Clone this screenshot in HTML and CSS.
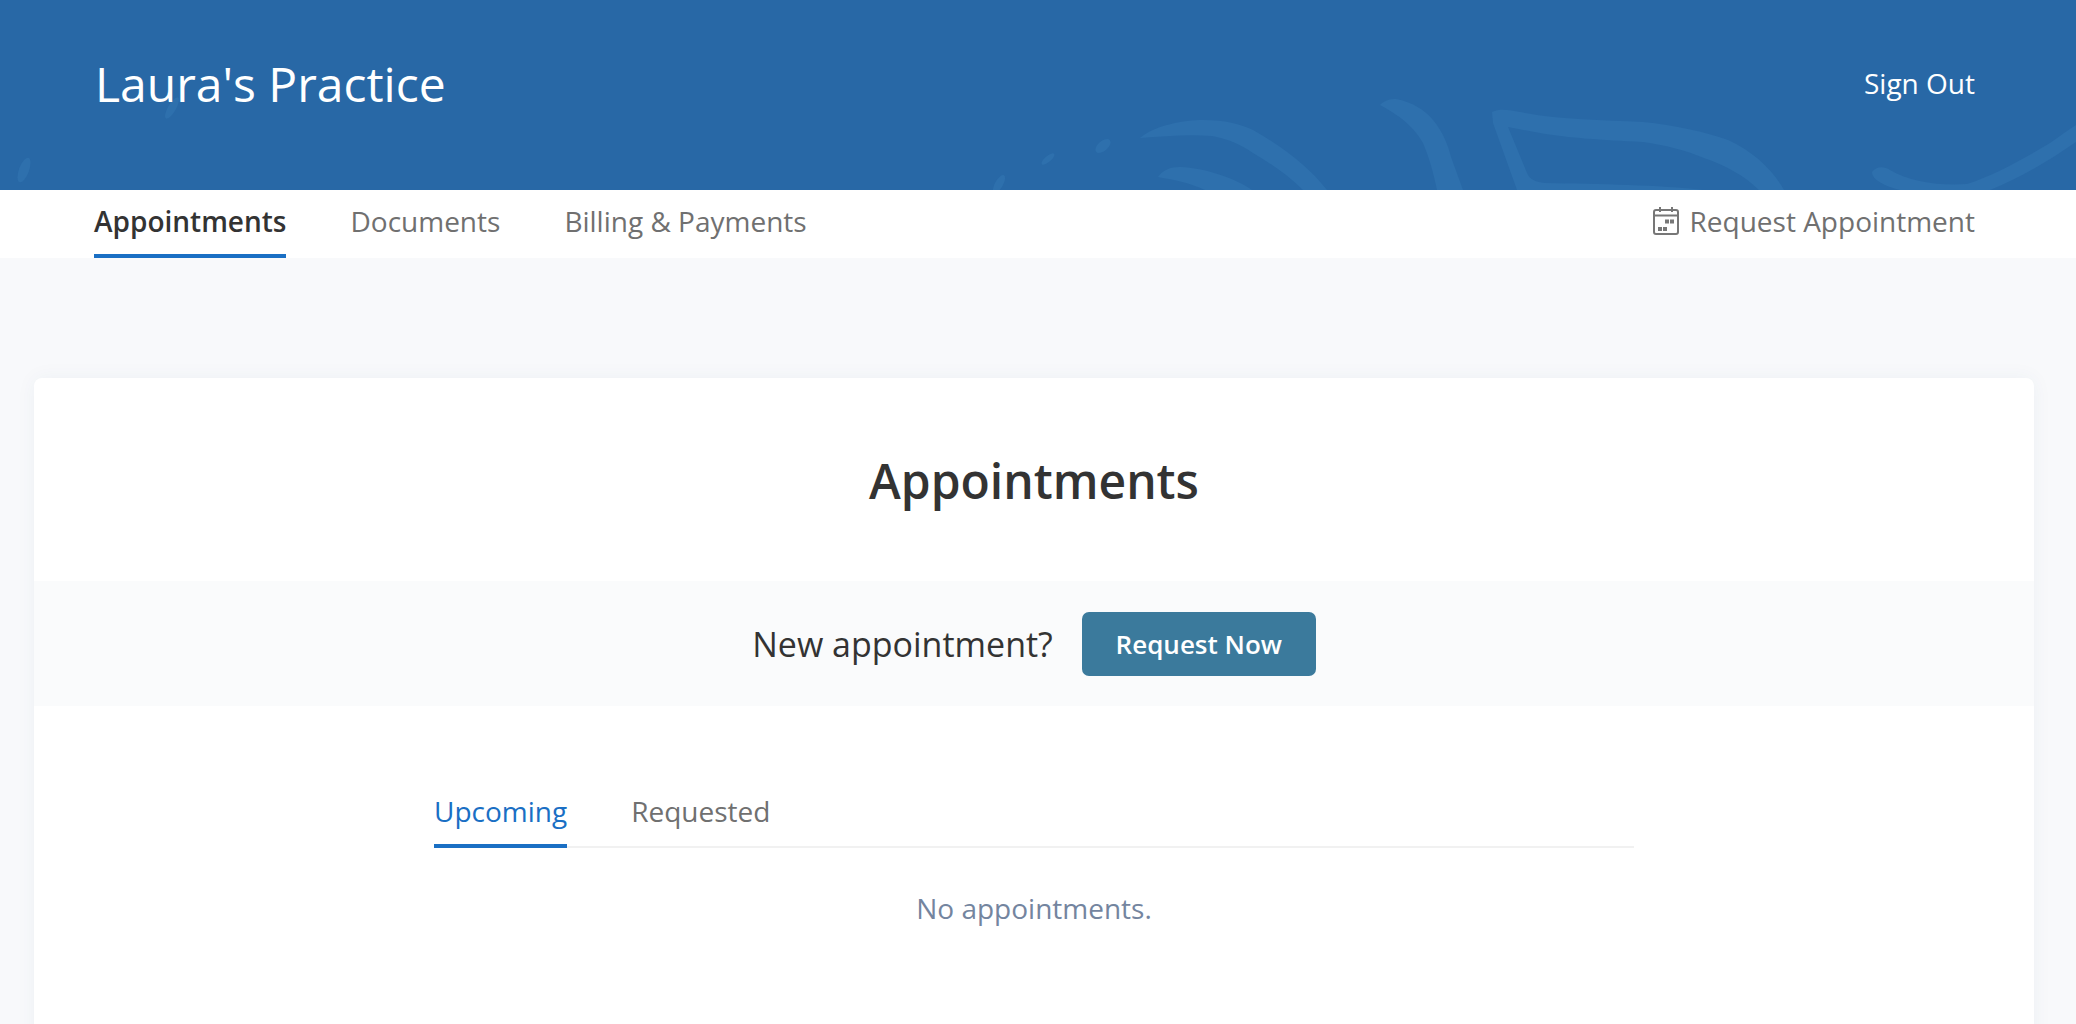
FILE: index.html
```html
<!DOCTYPE html>
<html lang="en">
<head>
  <meta charset="UTF-8" />
  <title>Appointments</title>
  <link rel="stylesheet" href="styles.css">
</head>
<body>
  <div class="header">
    <svg class="header-art" viewBox="0 0 2076 190" width="2076" height="190" aria-hidden="true">
      <g fill="#2e70ad">
        <path d="M1140 138C1155 125 1185 120 1203 120C1225 120 1240 124 1253 130C1285 148 1310 168 1327 190L1303 190C1288 175 1270 163 1253 153C1240 144 1228 139 1212 136C1190 134 1165 136 1140 138Z"/>
        <path d="M1158 177C1163 170 1170 167 1180 167C1205 168 1235 178 1252 190L1205 190C1190 183 1175 180 1158 177Z"/>
        <path d="M1380 105C1385 100 1390 99 1396 99C1412 102 1425 110 1433 120C1443 132 1448 145 1451 157L1463 190L1437 190C1433 170 1428 155 1423 143C1417 132 1405 118 1380 105Z"/>
        <path d="M1492 112C1500 108 1510 110 1520 112C1560 120 1600 120 1643 122C1675 125 1705 132 1728 140C1755 152 1774 172 1784 190L1759 190C1745 176 1725 165 1704 158C1685 150 1665 145 1643 142C1600 140 1570 138 1540 133L1508 127L1527 173C1530 180 1536 182 1545 183C1600 184 1660 185 1703 190L1517 190L1493 123Z"/>
        <path d="M1872 172C1876 166 1884 166 1890 170C1910 182 1940 186 1967 184C1995 175 2025 158 2050 143C2060 136 2068 130 2076 125L2076 142C2050 160 2020 178 1990 190L1900 190C1885 186 1872 180 1872 172Z"/>
        <ellipse cx="1103" cy="146" rx="5" ry="9" transform="rotate(50 1103 146)"/>
        <ellipse cx="1048" cy="159" rx="3" ry="8" transform="rotate(50 1048 159)"/>
        <ellipse cx="24" cy="170" rx="5" ry="13" transform="rotate(20 24 170)"/>
        <ellipse cx="172" cy="108" rx="4" ry="12" transform="rotate(30 172 108)"/>
        <ellipse cx="999" cy="184" rx="4" ry="10" transform="rotate(30 999 184)"/>
      </g>
    </svg>
    <div class="practice-name">Laura's Practice</div>
    <a class="sign-out" href="#">Sign Out</a>
  </div>

  <div class="nav">
    <div class="nav-links">
      <a class="nav-link active" href="#">Appointments</a>
      <a class="nav-link" href="#">Documents</a>
      <a class="nav-link" href="#">Billing &amp; Payments</a>
    </div>
    <a class="nav-request" href="#">
      <svg class="calendar" viewBox="0 0 26 28" width="26" height="28" aria-hidden="true">
        <rect x="1" y="3" width="24" height="24" rx="2" fill="none" stroke="currentColor" stroke-width="2"/>
        <path d="M1 8.500h24M7 0v5M19 0v5" fill="none" stroke="currentColor" stroke-width="2"/>
        <path d="M12 12.500h4v4h-4zM17 12.500h4v4h-4zM5 20h4v4H5zM10 20h4v4h-4z" fill="currentColor"/>
      </svg>
      Request Appointment
    </a>
  </div>

  <div class="main">
    <div class="card">
      <h1>Appointments</h1>
      <div class="new-band">
        <span>New appointment?</span>
        <button class="request-btn">Request Now</button>
      </div>
      <div class="tabs-wrap">
        <div class="tabs">
          <a class="tab active" href="#">Upcoming</a>
          <a class="tab" href="#">Requested</a>
        </div>
        <p class="empty">No appointments.</p>
      </div>
    </div>
  </div>
</body>
</html>
```

FILE: styles.css
```css
html, body {
  height: 1024px;
  overflow: hidden;
}
body {
  margin: 0;
  font-family: "Open Sans", "Noto Sans", sans-serif;
  background: #f8f9fb;
  color: #333;
}
a {
  text-decoration: none;
}
.header {
  position: relative;
  height: 190px;
  padding: 0 101px 0 95px;
  background: #2868a6;
  color: #fff;
  display: flex;
  justify-content: space-between;
  align-items: center;
  box-sizing: border-box;
  overflow: hidden;
}
.header-art {
  position: absolute;
  left: 0;
  top: 0;
}
.practice-name {
  position: relative;
  font-size: 48px;
  line-height: 60px;
  margin-top: -22px;
}
.sign-out {
  position: relative;
  color: #fff;
  font-size: 28px;
  line-height: 38px;
  margin-top: -24px;
}
.nav {
  height: 68px;
  padding: 0 101px 0 94px;
  background: #fff;
  display: flex;
  justify-content: space-between;
  box-sizing: border-box;
}
.nav-links {
  display: flex;
  gap: 64px;
}
.nav-link {
  color: #707070;
  font-size: 28px;
  line-height: 62px;
  height: 64px;
  border-bottom: 4px solid transparent;
}
.nav-link.active {
  color: #333;
  font-weight: 600;
  border-bottom-color: #1a6fc4;
}
.nav-request {
  color: #707070;
  font-size: 28px;
  line-height: 62px;
  display: flex;
  align-items: center;
  gap: 11px;
  height: 62px;
}
.calendar {
  color: #777;
}
.main {
  padding: 120px 42px 0 34px;
}
.card {
  background: #fff;
  border-radius: 8px;
  box-shadow: 0 0 20px rgba(40, 70, 110, 0.05);
  height: 800px;
}
h1 {
  margin: 0;
  padding: 70px 0 68px;
  text-align: center;
  font-size: 48px;
  line-height: 65px;
  font-weight: 600;
  color: #333;
}
.new-band {
  height: 125px;
  background: #fafbfc;
  display: flex;
  justify-content: center;
  align-items: center;
  gap: 29px;
  font-size: 34px;
  color: #333;
}
.request-btn {
  width: 234px;
  height: 64px;
  background: #3b7a9c;
  color: #fff;
  border: none;
  border-radius: 7px;
  font-family: inherit;
  font-size: 26px;
  font-weight: 600;
  cursor: pointer;
}
.tabs-wrap {
  width: 1200px;
  margin: 0 auto;
  padding-top: 86px;
}
.tabs {
  display: flex;
  gap: 64px;
  border-bottom: 2px solid #f1f1f1;
}
.tab {
  color: #707070;
  font-size: 28px;
  line-height: 38px;
  padding-bottom: 14px;
  margin-bottom: -2px;
  border-bottom: 4px solid transparent;
}
.tab.active {
  color: #1a6fc4;
  border-bottom-color: #1a6fc4;
}
.empty {
  margin: 41px 0 0;
  text-align: center;
  font-size: 28px;
  line-height: 38px;
  color: #74859f;
}
```
